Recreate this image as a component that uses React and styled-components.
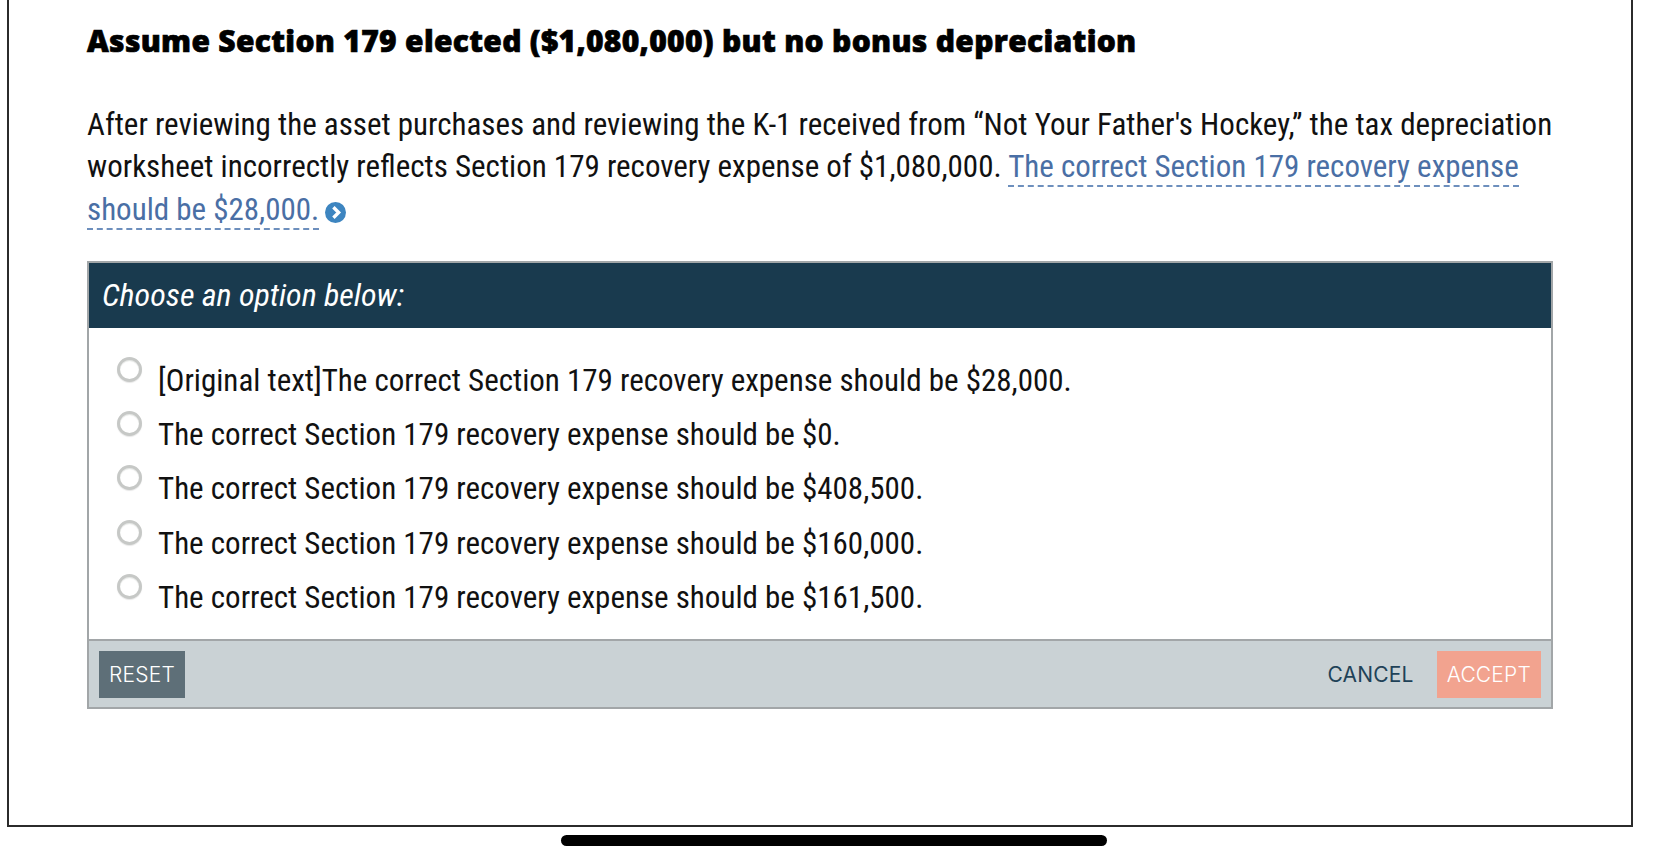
import React from 'react';
import styled, { createGlobalStyle } from 'styled-components';

const GlobalStyle = createGlobalStyle`
  html, body {
    margin: 0;
    padding: 0;
    background: #fff;
  }
`;

const Page = styled.div`
  width: 1668px;
  height: 861px;
  overflow: hidden;
  font-family: Roboto, "Liberation Sans", sans-serif;
  font-stretch: 85%;
  color: #111;
`;

const Frame = styled.div`
  box-sizing: border-box;
  width: 1626px;
  height: 827px;
  margin-left: 7px;
  padding: 19px 0 0 78px;
  border: 2px solid #2b2b2b;
  border-top: none;
`;

const Heading = styled.h1`
  margin: 0 0 40.6px;
  font-family: "Open Sans", Lato, sans-serif;
  font-stretch: 100%;
  font-size: 30px;
  line-height: 44px;
  font-weight: 800;
  letter-spacing: 0.3px;
  color: #000;
  -webkit-text-stroke: 0.7px #000;
`;

const Intro = styled.p`
  width: 1478px;
  margin: 0 0 29.4px;
  font-size: 31px;
  line-height: 42.6px;
`;

const Hint = styled.span`
  color: #4a6fa5;
  border-bottom: 2px dashed #6d8fbd;
`;

const HintIcon = styled.svg`
  width: 21px;
  height: 21px;
  margin-left: 6px;
  vertical-align: -3px;
`;

const Panel = styled.section`
  box-sizing: border-box;
  width: 1466px;
  border: 2px solid #a2a6a8;
`;

const PanelHeader = styled.div`
  height: 65px;
  padding-left: 13px;
  background: #193a4e;
  color: #fff;
  font-size: 32px;
  font-style: italic;
  line-height: 65px;
`;

const Options = styled.div`
  display: flex;
  flex-direction: column;
  gap: 12.3px;
  padding: 29px 0 23.4px 28px;
`;

const Option = styled.label`
  display: flex;
  align-items: flex-start;
  gap: 16px;
  height: 42px;
  font-size: 31px;
  line-height: 42px;
`;

const OptionText = styled.span`
  margin-top: 3px;
`;

const Radio = styled.span`
  flex: none;
  box-sizing: border-box;
  width: 25px;
  height: 25px;
  border-radius: 50%;
  background: #fff;
  border: 3px solid #c6c8c6;
  box-shadow: inset 0 1px 1px #e2e4e2, 0 1px 1px rgba(0, 0, 0, 0.1);
  filter: blur(0.5px);
`;

const Footer = styled.div`
  display: flex;
  align-items: center;
  justify-content: space-between;
  box-sizing: border-box;
  height: 68px;
  padding: 0 10px;
  background: #cad2d5;
  border-top: 2px solid #a2a6a8;
`;

const Actions = styled.div`
  display: flex;
  align-items: center;
  gap: 23px;
`;

const Button = styled.button`
  box-sizing: border-box;
  height: 47px;
  padding: 0 ${(p) => (p.$plain ? '0' : '10px')};
  border: none;
  background: ${(p) => p.$bg || 'transparent'};
  color: ${(p) => p.$color || '#fff'};
  font-family: Inter, Roboto, sans-serif;
  font-size: 21px;
  font-weight: ${(p) => (p.$plain ? 400 : 350)};
  letter-spacing: 0.2px;
`;

const HomeBar = styled.div`
  width: 546px;
  height: 11px;
  margin: 8px 0 0 561px;
  border-radius: 6px;
  background: #000;
`;

const options = [
  '[Original text]The correct Section 179 recovery expense should be $28,000.',
  'The correct Section 179 recovery expense should be $0.',
  'The correct Section 179 recovery expense should be $408,500.',
  'The correct Section 179 recovery expense should be $160,000.',
  'The correct Section 179 recovery expense should be $161,500.',
];

const App = () => (
  <>
    <GlobalStyle />
    <Page>
      <Frame>
        <Heading>Assume Section 179 elected ($1,080,000) but no bonus depreciation</Heading>
        <Intro>
          After reviewing the asset purchases and reviewing the K-1 received from “Not Your
          Father's Hockey,” the tax depreciation worksheet incorrectly reflects Section 179
          recovery expense of $1,080,000. <Hint>The correct Section 179 recovery expense should be $28,000.</Hint>
          <HintIcon viewBox="0 0 20 20">
            <circle cx="10" cy="10" r="10" fill="#3d85c0" />
            <path d="M8 5l5 5-5 5" fill="none" stroke="#fff" strokeWidth="3.2" />
          </HintIcon>
        </Intro>
        <Panel>
          <PanelHeader>Choose an option below:</PanelHeader>
          <Options>
            {options.map((text) => (
              <Option key={text}>
                <Radio />
                <OptionText>{text}</OptionText>
              </Option>
            ))}
          </Options>
          <Footer>
            <Button $bg="#5e6f78">RESET</Button>
            <Actions>
              <Button $plain $color="#1f4258">CANCEL</Button>
              <Button $bg="#f2a38f">ACCEPT</Button>
            </Actions>
          </Footer>
        </Panel>
      </Frame>
      <HomeBar />
    </Page>
  </>
);

export default App;
